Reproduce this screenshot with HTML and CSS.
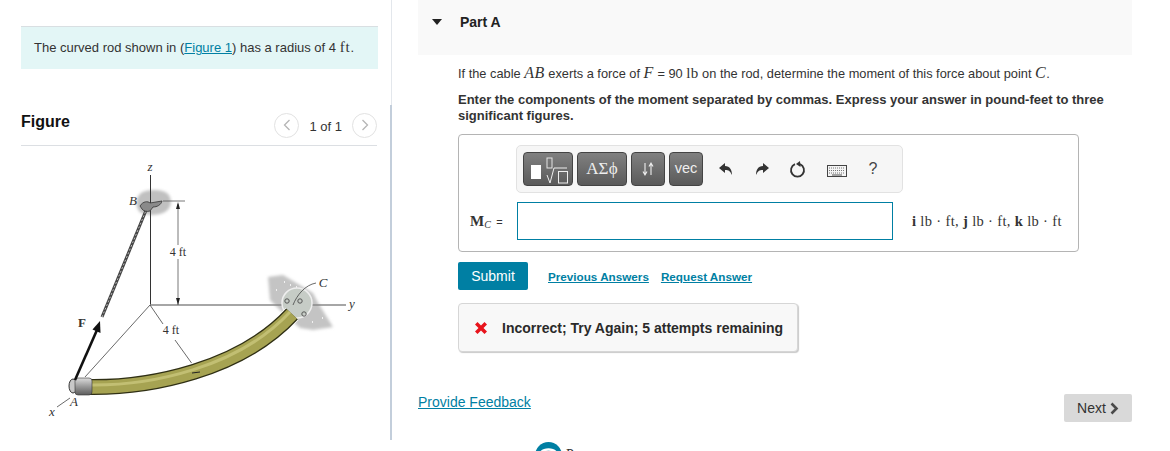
FILE: index.html
```html
<!DOCTYPE html>
<html lang="en">
<head>
<meta charset="utf-8">
<title>Part A</title>
<link rel="stylesheet" href="styles.css">
</head>
<body>
<div class="page">
  <aside class="aside">
    <div class="intro">The curved rod shown in (<a href="#">Figure 1</a>) has a radius of 4 <span class="serif">ft</span>.</div>
    <div class="figure-head">
      <h2>Figure</h2>
      <div class="pager">
        <span class="round"><svg width="8" height="12" viewBox="0 0 8 12"><path d="M6.500 1 1.500 6l5 5" fill="none" stroke="#b5b5b5" stroke-width="1.300"/></svg></span>
        <span class="count">1 of 1</span>
        <span class="round"><svg width="8" height="12" viewBox="0 0 8 12"><path d="M1.500 1l5 5-5 5" fill="none" stroke="#b5b5b5" stroke-width="1.300"/></svg></span>
      </div>
    </div>
    <svg class="diagram" width="357" height="290" viewBox="21 146 357 290">
      <defs>
        <linearGradient id="collar" x1="0" y1="0" x2="0" y2="1"><stop offset="0" stop-color="#dcdcdc"/><stop offset=".5" stop-color="#999"/><stop offset="1" stop-color="#5c5c5c"/></linearGradient>
        <filter id="soft"><feGaussianBlur stdDeviation="1.800"/></filter>
      </defs>
      <path d="M141 193c6-4 22-4 27 1 5 6 3 15-3 18-7 4-22 4-26-1-4-6-3-14 2-18z" fill="#c0c0c0" filter="url(#soft)"/>
      <path d="M268 277l15-2 30 18 4 8 16 26-20 3-13-2-17-15-13-13z" fill="#c4c4c4" filter="url(#soft)"/>
      <path d="M284 282h1M290 285h1M296 287h1M276 290h1M272 307h1M275 312h1M318 296h1M322 318h1M312 322h1M326 310h1M304 291h1" stroke="#fff" stroke-width="1.500" fill="none"/>
      <path d="M150.500 175V305" stroke="#333" stroke-width="1" fill="none"/>
      <path d="M150 305H346" stroke="#888" stroke-width="1.500" fill="none"/>
      <path d="M150 305 85 377M70 398 57 407" stroke="#444" stroke-width=".8" fill="none"/>
      <path d="M163 201H185M178 204V305" stroke="#555" stroke-width=".8" fill="none"/>
      <path d="M178 202l-2 7h4zM178 305l-2-7h4z" fill="#222"/>
      <rect x="166" y="245" width="24" height="14" fill="#fff"/>
      <path d="M150 305 163 324M175 340 198 372M192 373 207 371" stroke="#444" stroke-width=".8" fill="none"/>
      <path d="M147 208 102 317" stroke="#444" stroke-width="3" fill="none"/>
      <path d="M147 208 102 317" stroke="#bbb" stroke-width="1" stroke-dasharray="2 2" fill="none"/>
      <path d="M140 206c3-5 8-5 10-3l12-2c-1 4-5 6-9 6l-3 4c-3 1-7 0-8-2z" fill="#8a8a8a" stroke="#333" stroke-width=".8"/>
      <circle cx="297" cy="303" r="15" fill="#c6ccc6" stroke="#eee" stroke-width="1.500"/>
      <circle cx="287" cy="301" r="2.200" fill="none" stroke="#555"/>
      <circle cx="300" cy="301" r="2.200" fill="none" stroke="#555"/>
      <circle cx="304" cy="314" r="2.200" fill="none" stroke="#555"/>
      <path d="M88 387C150 388 240 370 292 314" stroke="#fff" stroke-width="18" fill="none"/>
      <path d="M88 387C150 388 240 370 292 314" stroke="#2f2f14" stroke-width="16" fill="none"/>
      <path d="M88 387C150 388 240 370 292 314" stroke="#a6a352" stroke-width="13.500" fill="none"/>
      <path d="M88 385C150 386 238 368 290 312" stroke="#c2bf73" stroke-width="3" fill="none"/>
      <path d="M316 283C305 285 297 295 293 305" stroke="#444" stroke-width=".8" fill="none"/>
      <ellipse cx="73" cy="386" rx="4" ry="7" fill="#c8c8c8" stroke="#333"/>
      <rect x="75" y="378" width="17" height="17" rx="3" fill="url(#collar)" stroke="#333" stroke-width=".6"/>
      <path d="M75 380 97 330" stroke="#111" stroke-width="2.600" fill="none"/>
      <path d="M100 321l.5 12-8-3.500z" fill="#111"/>
      <path d="M192 373 200 372" stroke="#222" fill="none"/>
      <text class="fig it" x="150" y="171" text-anchor="middle">z</text>
      <text class="fig it" x="133" y="205" text-anchor="middle">B</text>
      <text class="fig" x="178" y="256" text-anchor="middle">4 ft</text>
      <text class="fig it" x="323" y="287" text-anchor="middle">C</text>
      <text class="fig it" x="352" y="308" text-anchor="middle">y</text>
      <text class="fig bold" x="82" y="327" text-anchor="middle">F</text>
      <text class="fig" x="171" y="334" text-anchor="middle">4 ft</text>
      <text class="fig it" x="74" y="406" text-anchor="middle">A</text>
      <text class="fig it" x="52" y="416" text-anchor="middle">x</text>
    </svg>
  </aside>

  <main class="main">
    <header class="part-head"><span class="caret"></span><h3>Part A</h3></header>
    <section class="part-body">
      <p class="question">If the cable <i class="math">AB</i> exerts a force of <i class="math">F</i> = 90 <span class="lb">lb</span> on the rod, determine the moment of this force about point <i class="math">C</i>.</p>
      <p class="instruct">Enter the components of the moment separated by commas. Express your answer in pound-feet to three significant figures.</p>
      <div class="answer">
        <div class="toolbar">
          <span class="tbtn w50">
            <svg width="48" height="32" viewBox="1 1 48 32"><rect x="8" y="13" width="10" height="14" fill="#fff"/><rect x="24" y="6" width="5" height="10" fill="none" stroke="#e4e4e4"/><path d="M24 23l3 8 4-15h13" fill="none" stroke="#eee"/><rect x="35.500" y="19.500" width="9" height="11.500" fill="none" stroke="#eee"/></svg>
          </span>
          <span class="tbtn w50 greek">ΑΣϕ</span>
          <span class="tbtn w34"><svg width="16" height="16" viewBox="0 0 16 16"><path d="M5 2v11M3 10.500 5 14l2 -3.500M11 14V3M9 5.500 11 2l2 3.500" fill="none" stroke="#eee" stroke-width="1.100"/></svg></span>
          <span class="tbtn w34 vec">vec</span>
          <span class="tool undo"><svg width="16" height="14" viewBox="0 0 16 14"><path d="M1 6l6-5v3c5 0 7 4 7 9-2-4-3-5-7-5v3z" fill="#333"/></svg></span>
          <span class="tool redo"><svg width="16" height="14" viewBox="0 0 16 14"><path d="M15 6 9 1v3c-5 0-7 4-7 9 2-4 3-5 7-5v3z" fill="#333"/></svg></span>
          <span class="tool reset"><svg width="18" height="18" viewBox="0 0 18 18"><path d="M6 4.200a6.500 6.500 0 1 0 5 0" fill="none" stroke="#333" stroke-width="1.800"/><path d="M11 1l.5 6L7 4z" fill="#333"/></svg></span>
          <span class="tool keys"><svg width="20" height="12" viewBox="0 0 20 12"><rect x=".5" y=".5" width="19" height="11" fill="#f4f4f4" stroke="#444"/><path d="M2 3h16M2 5.500h16M2 8h16" stroke="#777" stroke-dasharray="1 1"/><path d="M5 10h10" stroke="#555"/></svg></span>
          <span class="tool help">?</span>
        </div>
        <div class="entry">
          <span class="lhs"><b class="mb">M</b><i class="sub">C</i> <span class="eq">=</span></span>
          <input class="field" type="text" aria-label="Answer">
          <span class="units"><b>i</b> lb · ft, <b>j</b> lb · ft, <b>k</b> lb · ft</span>
        </div>
      </div>
      <div class="actions">
        <button class="submit" type="button">Submit</button>
        <a class="act first" href="#">Previous Answers</a>
        <a class="act" href="#">Request Answer</a>
      </div>
      <div class="feedback">
        <svg width="14" height="14" viewBox="0 0 14 14"><path d="M1 3.500 3.500 1 7 4.500 10.500 1 13 3.500 9.500 7 13 10.500 10.500 13 7 9.500 3.500 13 1 10.500 4.500 7z" fill="#e8141c"/></svg>
        <span>Incorrect; Try Again; 5 attempts remaining</span>
      </div>
    </section>
    <footer class="foot">
      <a class="provide" href="#">Provide Feedback</a>
      <span class="next">Next <svg width="9" height="13" viewBox="0 0 9 13"><path d="M1.500 1.500 6.500 6.500l-5 5" fill="none" stroke="#4a4a4a" stroke-width="2.600"/></svg></span>
    </footer>
    <div class="brand">
      <svg width="27" height="27" viewBox="0 0 27 27"><circle cx="13.500" cy="13.500" r="13.500" fill="#007fa3"/><path d="M5 12c3-6 14-6 17 0" fill="none" stroke="#fff" stroke-width="2.500"/></svg>
      <span class="brand-name">Pearson</span>
    </div>
  </main>
</div>
</body>
</html>
```
FILE: styles.css
```css
* { box-sizing: border-box; }
html, body { margin: 0; height: 451px; overflow: hidden; background: #fff; }
body { font-family: "Liberation Sans", Arial, sans-serif; color: #333; font-size: 13px; }
a { color: #007fa3; }
h2, h3, p { margin: 0; }

.page { display: grid; grid-template-columns: 392px 1fr; height: 451px; }

.aside { position: relative; height: 440px; padding: 26px 13px 0 21px; border-right: 1px solid #e3e7ec; }
.aside::after { content: ""; position: absolute; top: 105px; bottom: 0; right: -1px; width: 2px; background: #c3cedb; }

.intro { width: 357px; height: 43px; padding: 0 13px; line-height: 41px; background: #e3f6f6; border-top: 1px solid #d9dfe2; font-size: 13px; color: #333; white-space: nowrap; }
.serif { font-family: "Liberation Serif", serif; font-size: 15px; letter-spacing: .8px; }

.figure-head { display: flex; justify-content: space-between; align-items: center; width: 356px; height: 43px; margin-top: 34px; border-bottom: 1px solid #dcdfe3; padding-bottom: 3px; }
.figure-head h2 { font-size: 16px; color: #111; font-weight: bold; margin-top: -2px; }
.pager { display: flex; align-items: center; gap: 10px; margin-top: 5px; font-size: 13px; }
.round { width: 25px; height: 25px; border: 1px solid #e2e2e2; border-radius: 50%; display: flex; align-items: center; justify-content: center; }
.count { color: #333; padding-top: 3px; }
.diagram { display: block; }
.fig { font-family: "Liberation Serif", serif; font-size: 12px; fill: #333; }
.fig.it { font-style: italic; font-size: 13px; }
.fig.bold { font-weight: bold; font-size: 13px; }

.main { padding-left: 26px; width: 740px; }
.part-head { width: 714px; height: 55px; background: #f9f9f9; display: flex; align-items: flex-start; padding: 14px 0 0 14px; }
.caret { width: 0; height: 0; margin-top: 5px; border-left: 5px solid transparent; border-right: 5px solid transparent; border-top: 6px solid #222; }
.part-head h3 { font-size: 14px; font-weight: bold; color: #222; margin-left: 18px; line-height: 16px; }

.part-body { padding-left: 40px; width: 714px; }
.question { margin-top: 10px; font-size: 12.800px; line-height: 16px; color: #333; white-space: nowrap; }
.math { font-family: "Liberation Serif", serif; font-size: 16px; font-style: italic; letter-spacing: .5px; }
.lb { font-family: "Liberation Serif", serif; font-size: 15px; letter-spacing: .3px; }
.instruct { margin-top: 10px; font-size: 13px; line-height: 16px; font-weight: bold; color: #333; width: 660px; }

.answer { width: 621px; height: 118px; margin-top: 10px; border: 1px solid #b4b4b4; border-radius: 4px; padding: 10px 0 0 11px; }
.toolbar { display: flex; align-items: center; width: 387px; height: 48px; margin-left: 46px; padding-left: 6px; background: #f6f6f6; border: 1px solid #e2e2e2; border-radius: 5px; }
.tbtn { display: flex; align-items: center; justify-content: center; height: 34px; margin-right: 4px; border: 1px solid #444; border-radius: 4px; background: linear-gradient(#808080, #5a5a5a); color: #eee; }
.w50 { width: 50px; }
.w34 { width: 34px; }
.greek { font-family: "Liberation Serif", serif; font-size: 17px; letter-spacing: .2px; }
.vec { font-size: 14.500px; padding-bottom: 3px; }
.tool { display: flex; justify-content: center; align-items: center; width: 36px; color: #444; }
.undo { margin-left: 1px; }
.tool.keys { width: 42px; padding-top: 4px; }
.tool.help { width: 32px; font-size: 16px; padding: 0 2px 1px 0; }

.entry { display: flex; align-items: center; margin-top: 9px; height: 38px; }
.lhs { width: 47px; font-family: "Liberation Serif", serif; font-size: 14px; white-space: nowrap; color: #333; }
.mb { font-size: 15px; }
.sub { font-size: 10px; vertical-align: -2px; }
.eq { font-family: "Liberation Sans", sans-serif; font-size: 11px; margin-left: 2px; }
.field { width: 376px; height: 38px; border: 1px solid #007fa3; background: #fff; padding: 0; outline: 0; }
.units { margin-left: 19px; font-family: "Liberation Serif", serif; font-size: 14.500px; color: #333; white-space: nowrap; letter-spacing: .35px; }

.actions { display: flex; align-items: center; height: 28px; margin-top: 10px; }
.submit { width: 70px; height: 28px; padding: 0; border: 0; border-radius: 2px; background: #007fa3; color: #fff; font: 14px "Liberation Sans", sans-serif; }
.act { font-size: 11.700px; font-weight: bold; margin-left: 12px; }
.act.first { margin-left: 20px; }

.feedback { display: flex; align-items: center; width: 340px; height: 49px; margin-top: 13px; padding-left: 15px; background: #f8f8f8; border: 1px solid #d6d6d6; border-radius: 4px; box-shadow: 1px 1px 1px #c9c9c9; font-size: 14px; font-weight: bold; color: #2a2a2a; }
.feedback span { margin-left: 14px; }

.foot { display: flex; justify-content: space-between; align-items: flex-start; width: 714px; margin-top: 41px; }
.provide { font-size: 14px; line-height: 18px; }
.next { display: flex; align-items: center; justify-content: center; gap: 4px; width: 68px; height: 28px; margin-top: 1px; background: #d9d9d9; border-radius: 2px; color: #333; font-size: 14px; }

.brand { display: flex; align-items: flex-start; margin: 20px 0 0 117px; }
.brand-name { margin: 5px 0 0 4px; font-family: "Liberation Serif", serif; font-size: 14px; color: #333; }
```
